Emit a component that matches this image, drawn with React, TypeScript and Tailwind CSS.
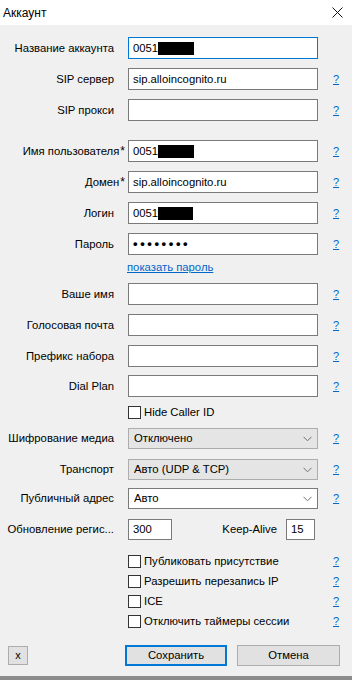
import React from 'react';

const Help = () => (
  <span className="ml-[15px] text-[11px] leading-none text-[#0066cc] underline">?</span>
);

const Redact = ({ w = 36 }: { w?: number }) => (
  <span className="inline-block h-[13px] bg-black" style={{ width: w }} />
);

type RowProps = {
  label: string;
  star?: boolean;
  help?: boolean;
  mt: string;
  children: React.ReactNode;
};

const Row = ({ label, star, help = true, mt, children }: RowProps) => (
  <div className={`flex items-center h-[22px] ${mt}`}>
    {star ? (
      <div className="w-[125px] shrink-0 flex justify-end items-center whitespace-nowrap">
        <span>{label}</span>
        <span className="ml-[1px] text-[12px]">*</span>
      </div>
    ) : (
      <div className="w-[114px] mr-[11px] shrink-0 text-right whitespace-nowrap">{label}</div>
    )}
    <div className="ml-[3px] w-[190px] h-full shrink-0">{children}</div>
    {help && <Help />}
  </div>
);

const Field = ({ children, active }: { children?: React.ReactNode; active?: boolean }) => (
  <div
    className={`h-full w-full bg-white border flex items-center px-[4px] whitespace-nowrap ${
      active ? 'border-[#0078d7]' : 'border-[#7a7a7a]'
    }`}
  >
    {children}
  </div>
);

const Chevron = () => (
  <svg width="9" height="6" viewBox="0 0 9 6" className="ml-auto mr-[5px]">
    <path d="M0.5 0.8 L4.5 4.8 L8.5 0.8" fill="none" stroke="#707070" strokeWidth="1" />
  </svg>
);

const Select = ({ value, editable }: { value: string; editable?: boolean }) => (
  <div
    className={`h-full w-full border flex items-center pl-[5px] whitespace-nowrap ${
      editable ? 'bg-white border-[#7a7a7a]' : 'bg-[#e5e5e5] border-[#adadad]'
    }`}
  >
    {value}
    <Chevron />
  </div>
);

const SelectRow = ({ label, value, editable, mt }: { label: string; value: string; editable?: boolean; mt: string }) => (
  <div className={`h-[21px] flex items-center ${mt}`}>
    <div className="w-[114px] shrink-0 text-right whitespace-nowrap">{label}</div>
    <div className="ml-[14px] w-[190px] h-full shrink-0">
      <Select value={value} editable={editable} />
    </div>
    <Help />
  </div>
);

const Box = () => <span className="w-[13px] h-[13px] border border-[#333333] bg-white shrink-0" />;

const Check = ({ label, help = true, mt = '' }: { label: string; help?: boolean; mt?: string }) => (
  <div className={`flex items-center h-[20px] ${mt}`}>
    <div className="w-[128px] shrink-0" />
    <div className="w-[190px] shrink-0 flex items-center gap-[3px] whitespace-nowrap">
      <Box />
      <span>{label}</span>
    </div>
    {help && <Help />}
  </div>
);

const App: React.FC = () => {
  return (
    <div className="w-[352px] h-[680px] bg-[#f0f0f0] flex flex-col font-['Liberation_Sans',Arial,sans-serif] text-[11.3px] text-black overflow-hidden">
      {/* title bar */}
      <div className="h-[25px] bg-white flex items-center justify-between pl-[3px] pr-[9px] shrink-0">
        <span className="text-[12px]">Аккаунт</span>
        <svg width="11" height="11" viewBox="0 0 11 11">
          <path d="M0.5 0.5 L10.5 10.5 M10.5 0.5 L0.5 10.5" stroke="#111" strokeWidth="1" />
        </svg>
      </div>

      <Row label="Название аккаунта" help={false} mt="mt-[12px]">
        <Field active>
          0051<Redact />
        </Field>
      </Row>
      <Row label="SIP сервер" mt="mt-[9px]">
        <Field>sip.alloincognito.ru</Field>
      </Row>
      <Row label="SIP прокси" mt="mt-[9px]">
        <Field />
      </Row>

      <Row label="Имя пользователя" star mt="mt-[19px]">
        <Field>
          0051<Redact />
        </Field>
      </Row>
      <Row label="Домен" star mt="mt-[9px]">
        <Field>sip.alloincognito.ru</Field>
      </Row>
      <Row label="Логин" mt="mt-[9px]">
        <Field>
          0051<Redact w={35} />
        </Field>
      </Row>
      <Row label="Пароль" mt="mt-[9px]">
        <Field>
          <span className="text-[13px] font-bold tracking-[2.6px]">••••••••</span>
        </Field>
      </Row>
      <div className="flex h-[14px] items-center mt-[5px]">
        <span className="ml-[127px] text-[#0066cc] underline">показать пароль</span>
      </div>

      <Row label="Ваше имя" mt="mt-[9px]">
        <Field />
      </Row>
      <Row label="Голосовая почта" mt="mt-[9px]">
        <Field />
      </Row>
      <Row label="Префикс набора" mt="mt-[9px]">
        <Field />
      </Row>
      <Row label="Dial Plan" mt="mt-[8px]">
        <Field />
      </Row>

      <div className="flex items-center h-[16px] mt-[7px]">
        <div className="w-[128px] shrink-0" />
        <div className="flex items-center gap-[3px]">
          <Box />
          <span>Hide Caller ID</span>
        </div>
      </div>

      <SelectRow label="Шифрование медиа" value="Отключено" mt="mt-[8px]" />
      <SelectRow label="Транспорт" value="Авто (UDP & TCP)" mt="mt-[10px]" />
      <SelectRow label="Публичный адрес" value="Авто" editable mt="mt-[8px]" />

      <div className="mt-[10px] h-[21px] flex items-center">
        <div className="w-[114px] shrink-0 text-right whitespace-nowrap">Обновление регис...</div>
        <div className="ml-[14px] w-[44px] h-full shrink-0">
          <Field>300</Field>
        </div>
        <div className="w-[105px] shrink-0 flex justify-end whitespace-nowrap">Keep-Alive</div>
        <div className="ml-[9px] w-[29px] h-full shrink-0">
          <Field>15</Field>
        </div>
      </div>

      <Check label="Публиковать присутствие" mt="mt-[11px]" />
      <Check label="Разрешить перезапись IP" />
      <Check label="ICE" />
      <Check label="Отключить таймеры сессии" />

      <div className="flex items-center h-[21px] mt-[14px]">
        <button className="ml-[8px] w-[20px] h-[19px] bg-[#e1e1e1] border border-[#adadad] text-[11px] leading-none flex items-center justify-center">
          x
        </button>
        <button className="ml-[97px] w-[102px] h-[21px] bg-[#e1e1e1] border-2 border-[#0078d7] flex items-center justify-center">
          Сохранить
        </button>
        <button className="ml-[10px] w-[103px] h-[21px] bg-[#e1e1e1] border border-[#adadad] flex items-center justify-center">
          Отмена
        </button>
      </div>

      <div className="mt-auto h-[4px] bg-[#8c8c8c] shrink-0" />
    </div>
  );
};

export default App;
